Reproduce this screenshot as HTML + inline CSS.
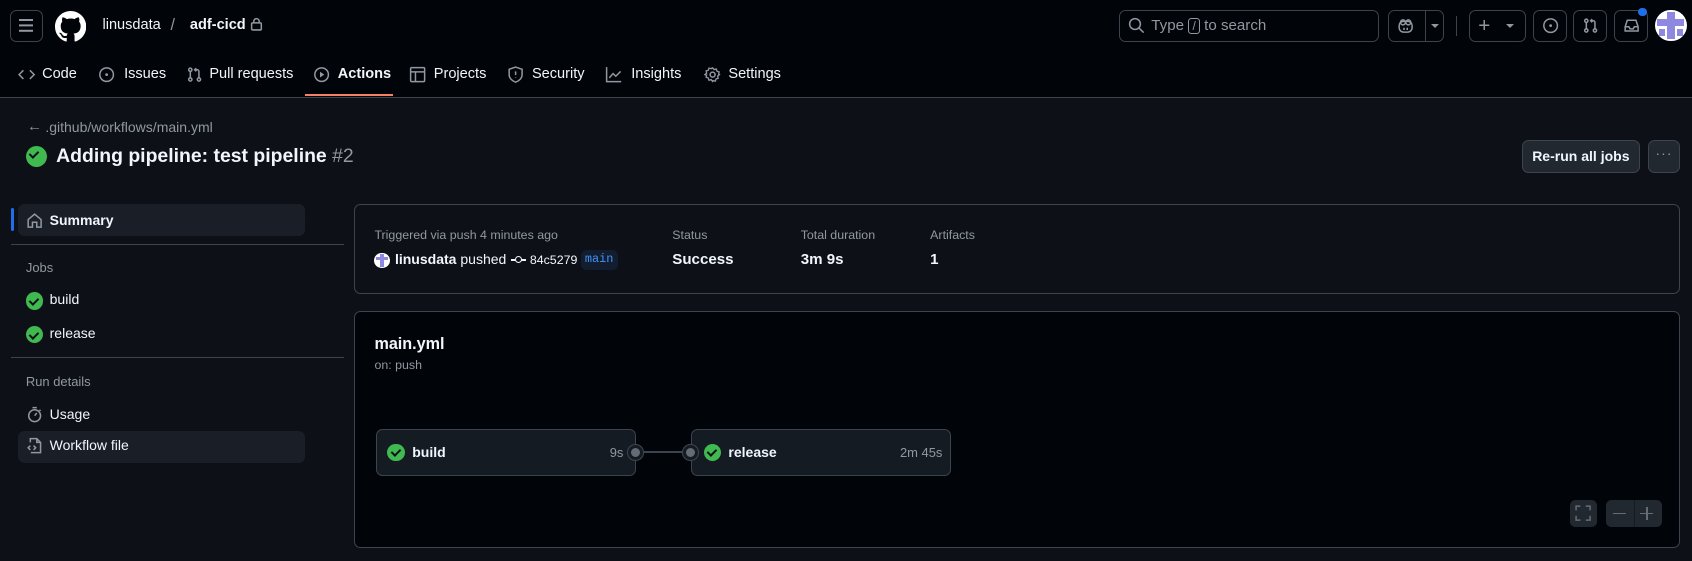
<!DOCTYPE html>
<html><head><meta charset="utf-8"><style>
html{zoom:1.0791}
*{box-sizing:border-box;margin:0;padding:0}
body{width:1568px;height:520px;overflow:hidden;background:#0d1117;font-family:"Liberation Sans",sans-serif;color:#f0f6fc;font-size:14px;position:relative}
.a{position:absolute}
.hdr{left:0;top:0;width:1568px;height:91px;background:#010409;border-bottom:1px solid #3d444d}
.btn{position:absolute;border:1px solid #3d444d;border-radius:6px;height:30px;top:9px}
.mut{color:#9198a1}
svg{display:block}
.ic{stroke:#9198a1;fill:none;stroke-width:1.4}
.nav{top:61px;font-size:13.5px;color:#f0f6fc}
.card{border:1px solid #3d444d;border-radius:6px}
.chk{position:absolute;width:16px;height:16px;border-radius:50%;background:#3fb950}
.chk:after{content:"";position:absolute;left:5px;top:3.5px;width:3.5px;height:6.5px;border:solid #0d1117;border-width:0 2px 2px 0;transform:rotate(45deg)}
</style></head><body>
<div class="a hdr"></div>
<div class="btn" style="left:9px;width:31px"><div class="a" style="left:8px;top:8px;width:13px;height:2px;background:#9198a1;box-shadow:0 5px 0 #9198a1,0 10px 0 #9198a1"></div></div>
<svg class="a" style="left:51px;top:10px" width="29" height="29" viewBox="0 0 16 16"><path fill="#fff" d="M8 0C3.58 0 0 3.58 0 8c0 3.540 2.29 6.53 5.47 7.59.4.07.55-.17.55-.38 0-.19-.01-.82-.01-1.49-2.01.37-2.530-.49-2.69-.94-.09-.23-.48-.94-.82-1.13-.28-.15-.68-.52-.01-.53.63-.01 1.08.58 1.23.82.72 1.21 1.87.87 2.33.66.07-.52.28-.87.51-1.07-1.78-.2-3.64-.89-3.64-3.95 0-.87.31-1.59.82-2.15-.08-.2-.36-1.02.08-2.12 0 0 .67-.21 2.2.82.64-.18 1.32-.27 2-.27.68 0 1.36.09 2 .27 1.53-1.04 2.2-.82 2.2-.82.44 1.1.16 1.92.08 2.12.51.56.82 1.27.82 2.15 0 3.07-1.87 3.75-3.65 3.95.29.25.54.73.54 1.48 0 1.07-.01 1.93-.01 2.2 0 .21.15.46.55.38A8.013 8.013 0 0016 8c0-4.42-3.58-8-8-8z"/></svg>
<div class="a" style="left:95px;top:16px;font-size:13.5px">linusdata</div>
<div class="a mut" style="left:158px;top:15px;font-size:15px">/</div>
<div class="a" style="left:176px;top:16px;font-weight:bold;font-size:13.5px">adf-cicd</div>
<svg class="a" style="left:232px;top:16px" width="12" height="13" viewBox="0 0 12 13"><rect x="1.5" y="5.5" width="9" height="6.5" rx="1" class="ic"/><path d="M3.5 5.5V4a2.5 2.5 0 015 0v1.5" class="ic"/></svg>
<div class="btn" style="left:1037px;width:241px"><svg class="a" style="left:7px;top:6px" width="16" height="16" viewBox="0 0 16 16"><circle cx="6.5" cy="6.5" r="5" class="ic"/><path d="M10 10l4.5 4.5" class="ic"/></svg><div class="a mut" style="left:29px;top:6px">Type <span style="border:1px solid #9198a1;border-radius:3px;padding:0 3px;font-size:11px">/</span> to search</div></div>
<div class="btn" style="left:1286px;width:52px"><div class="a" style="left:34px;top:0;width:1px;height:28px;background:#3d444d"></div><svg class="a" style="left:8px;top:6px" width="16" height="16" viewBox="0 0 16 16"><rect x="2" y="4" width="12" height="10" rx="4" class="ic"/><circle cx="5.5" cy="5" r="2.3" class="ic"/><circle cx="10.5" cy="5" r="2.3" class="ic"/><path d="M6.5 10v2M9.5 10v2" class="ic"/></svg><div class="a" style="left:39px;top:12px;border:4px solid transparent;border-top-color:#9198a1"></div></div>
<div class="a" style="left:1349px;top:15px;width:1px;height:18px;background:#3d444d"></div>
<div class="btn" style="left:1361px;width:53px"><div class="a" style="left:8px;top:3px;font-size:19px;color:#9198a1">+</div><div class="a" style="left:34px;top:12px;border:4px solid transparent;border-top-color:#9198a1"></div></div>
<div class="btn" style="left:1421px;width:31px"><svg class="a" style="left:7px;top:6px" width="16" height="16" viewBox="0 0 16 16"><circle cx="8" cy="8" r="6.3" class="ic"/><circle cx="8" cy="8" r="1.3" fill="#9198a1"/></svg></div>
<div class="btn" style="left:1458px;width:31px"><svg class="a" style="left:7px;top:6px" width="16" height="16" viewBox="0 0 16 16"><circle cx="4" cy="3.5" r="1.5" class="ic"/><circle cx="4" cy="12.5" r="1.5" class="ic"/><circle cx="12" cy="12.5" r="1.5" class="ic"/><path d="M4 5v6M12 11V5a1.5 1.5 0 00-1.5-1.5H8M9.5 2L8 3.5 9.5 5" class="ic"/></svg></div>
<div class="btn" style="left:1496px;width:31px"><svg class="a" style="left:7px;top:6px" width="16" height="16" viewBox="0 0 16 16"><path d="M2 9l2-6h8l2 6v4H2zM2 9h3.5l1 2h3l1-2H14" class="ic"/></svg></div>
<div class="a" style="left:1518px;top:7px;width:8px;height:8px;border-radius:50%;background:#1f6feb"></div>
<div class="a" style="left:1534px;top:9px;width:29px;height:29px;border-radius:50%;background:#fff;overflow:hidden"><div class="a" style="left:11px;top:2px;width:7px;height:25px;background:#8e88e0"></div><div class="a" style="left:2px;top:9px;width:25px;height:6px;background:#8e88e0"></div><div class="a" style="left:3px;top:18px;width:6px;height:6px;background:#8e88e0"></div><div class="a" style="left:20px;top:18px;width:6px;height:6px;background:#8e88e0"></div></div>

<svg class="a" style="left:17px;top:61px" width="16" height="16" viewBox="0 0 16 16"><path d="M5 4L1 8l4 4M11 4l4 4-4 4" class="ic"/></svg><div class="a nav" style="left:39px">Code</div>
<svg class="a" style="left:91px;top:61px" width="16" height="16" viewBox="0 0 16 16"><circle cx="8" cy="8" r="6.3" class="ic"/><circle cx="8" cy="8" r="1.3" fill="#9198a1"/></svg><div class="a nav" style="left:115px">Issues</div>
<svg class="a" style="left:172px;top:61px" width="16" height="16" viewBox="0 0 16 16"><circle cx="4" cy="3.5" r="1.5" class="ic"/><circle cx="4" cy="12.5" r="1.5" class="ic"/><circle cx="12" cy="12.5" r="1.5" class="ic"/><path d="M4 5v6M12 11V5a1.5 1.5 0 00-1.5-1.5H8M9.5 2L8 3.5 9.5 5" class="ic"/></svg><div class="a nav" style="left:194px">Pull requests</div>
<svg class="a" style="left:290px;top:61px" width="16" height="16" viewBox="0 0 16 16"><circle cx="8" cy="8" r="6.3" class="ic"/><path d="M6.5 5.3v5.4L10.5 8z" fill="#9198a1"/></svg><div class="a nav" style="left:313px;font-weight:bold">Actions</div>
<div class="a" style="left:283px;top:87px;width:81px;height:2px;background:#f78166"></div>
<svg class="a" style="left:379px;top:61px" width="16" height="16" viewBox="0 0 16 16"><rect x="1.5" y="1.5" width="13" height="13" rx="1" class="ic"/><path d="M1.5 5.5h13M6 5.5v9" class="ic"/></svg><div class="a nav" style="left:402px">Projects</div>
<svg class="a" style="left:470px;top:61px" width="16" height="16" viewBox="0 0 16 16"><path d="M8 1l6 2v5c0 3.5-3 6-6 7-3-1-6-3.5-6-7V3z" class="ic"/><path d="M8 5v3.5M8 10.5v.5" class="ic"/></svg><div class="a nav" style="left:493px">Security</div>
<svg class="a" style="left:561px;top:61px" width="16" height="16" viewBox="0 0 16 16"><path d="M1.5 1v13.5H15M4 11l3.5-4 2.5 2.5L14.5 5" class="ic"/></svg><div class="a nav" style="left:585px">Insights</div>
<svg class="a" style="left:652px;top:61px" width="16" height="16" viewBox="0 0 16 16"><circle cx="8" cy="8" r="2.3" class="ic"/><path d="M8 1l1.5 1.8 2.3-.5.7 2.2 2.2.7-.5 2.3L15 8l-1.8 1.5.5 2.3-2.2.7-.7 2.2-2.3-.5L8 15l-1.5-1.8-2.3.5-.7-2.2-2.2-.7.5-2.3L0 8l1.8-1.5-.5-2.3 2.2-.7.7-2.2 2.3.5z" class="ic" transform="scale(.9) translate(.9 .9)"/></svg><div class="a nav" style="left:675px">Settings</div>

<div class="a mut" style="left:25px;top:109px;font-size:14px">←</div>
<div class="a mut" style="left:42px;top:110px;font-size:13px">.github/workflows/main.yml</div>
<div class="chk" style="left:24px;top:135px;width:20px;height:20px"></div>
<div class="a" style="left:52px;top:134px;font-size:18px;font-weight:bold">Adding pipeline: test pipeline <span class="mut" style="font-weight:normal">#2</span></div>
<div class="a" style="left:1410px;top:130px;width:110px;height:30px;border:1px solid #3d444d;border-radius:6px;background:#212830;font-weight:bold;font-size:13px;text-align:center;line-height:28px">Re-run all jobs</div>
<div class="a mut" style="left:1527px;top:130px;width:30px;height:30px;border:1px solid #3d444d;border-radius:6px;background:#212830;text-align:center;line-height:24px;font-size:13px;letter-spacing:1px">···</div>

<div class="a" style="left:17px;top:189px;width:266px;height:30px;background:#1a1f27;border-radius:6px"></div>
<div class="a" style="left:10px;top:193px;width:3px;height:21px;background:#1f6feb;border-radius:2px"></div>
<svg class="a" style="left:24px;top:196px" width="16" height="16" viewBox="0 0 16 16"><path d="M2 7l6-5 6 5v7h-4v-4.5H6V14H2z" class="ic"/></svg>
<div class="a" style="left:46px;top:196px;font-weight:bold;font-size:13px">Summary</div>
<div class="a" style="left:10px;top:226px;width:309px;height:1px;background:#3d444d"></div>
<div class="a mut" style="left:24px;top:241px;font-size:12px">Jobs</div>
<div class="chk" style="left:24px;top:271px"></div><div class="a" style="left:46px;top:270px;font-size:13px">build</div>
<div class="chk" style="left:24px;top:302px"></div><div class="a" style="left:46px;top:301px;font-size:13px">release</div>
<div class="a" style="left:10px;top:331px;width:309px;height:1px;background:#3d444d"></div>
<div class="a mut" style="left:24px;top:347px;font-size:12px">Run details</div>
<svg class="a" style="left:24px;top:376px" width="16" height="16" viewBox="0 0 16 16"><circle cx="8" cy="9" r="5.5" class="ic"/><path d="M6 1.5h4M8 9l2-2.5M12.5 3.5l1 1" class="ic"/></svg>
<div class="a" style="left:46px;top:376px;font-size:13px">Usage</div>
<div class="a" style="left:17px;top:399px;width:266px;height:30px;background:#1a1f27;border-radius:6px"></div>
<svg class="a" style="left:24px;top:405px" width="16" height="16" viewBox="0 0 16 16"><path d="M4 5V1.5h6l3.5 3.5v9.5h-9M10 1.5V5h3.5M4 8l-2 2 2 2M7 8l2 2-2 2" class="ic"/></svg>
<div class="a" style="left:46px;top:405px;font-size:13px">Workflow file</div>

<div class="a card" style="left:328px;top:189px;width:1229px;height:83px"></div>
<div class="a mut" style="left:347px;top:211px;font-size:11.5px">Triggered via push 4 minutes ago</div>
<div class="a" style="left:347px;top:234px;width:14px;height:14px;border-radius:50%;background:#fff;overflow:hidden"><div class="a" style="left:5px;top:1px;width:4px;height:12px;background:#8e88e0"></div><div class="a" style="left:1px;top:4px;width:12px;height:3px;background:#8e88e0"></div></div>
<div class="a" style="left:366px;top:233px;font-size:13px"><b>linusdata</b> pushed</div>
<div class="a" style="left:474px;top:240px;width:13px;height:1.5px;background:#f0f6fc"></div><div class="a" style="left:477px;top:237px;width:7px;height:7px;border:1.5px solid #f0f6fc;border-radius:50%;background:#0d1117"></div>
<div class="a" style="left:491px;top:234px;font-size:11.5px">84c5279</div>
<div class="a" style="left:538px;top:232px;height:18px;padding:0 4px;background:#121d2f;border-radius:5px;color:#4493f8;font-family:'Liberation Mono',monospace;font-size:11px;line-height:18px">main</div>
<div class="a mut" style="left:623px;top:211px;font-size:11.5px">Status</div><div class="a" style="left:623px;top:233px;font-size:14px;font-weight:bold">Success</div>
<div class="a mut" style="left:742px;top:211px;font-size:11.5px">Total duration</div><div class="a" style="left:742px;top:233px;font-size:14px;font-weight:bold">3m 9s</div>
<div class="a mut" style="left:862px;top:211px;font-size:11.5px">Artifacts</div><div class="a" style="left:862px;top:233px;font-size:14px;font-weight:bold">1</div>

<div class="a card" style="left:328px;top:288px;width:1229px;height:220px;background:#010409"></div>
<div class="a" style="left:347px;top:310px;font-size:15px;font-weight:bold">main.yml</div>
<div class="a mut" style="left:347px;top:332px;font-size:11.5px">on: push</div>
<div class="a card" style="left:348px;top:398px;width:241px;height:43px;background:#151b23"></div>
<div class="chk" style="left:359px;top:411px"></div><div class="a" style="left:382px;top:411px;font-weight:bold;font-size:13px">build</div><div class="a mut" style="left:565px;top:412px;font-size:12px">9s</div>
<div class="a card" style="left:640px;top:398px;width:241px;height:43px;background:#151b23"></div>
<div class="chk" style="left:652px;top:411px"></div><div class="a" style="left:675px;top:411px;font-weight:bold;font-size:13px">release</div><div class="a mut" style="left:834px;top:412px;font-size:12px">2m 45s</div>
<div class="a" style="left:589px;top:418px;width:51px;height:2px;background:#3d444d"></div>
<div class="a" style="left:582px;top:412px;width:14px;height:14px;border-radius:50%;background:#656c76;border:3px solid #151b23;box-shadow:0 0 0 1px #3d444d"></div>
<div class="a" style="left:633px;top:412px;width:14px;height:14px;border-radius:50%;background:#656c76;border:3px solid #151b23;box-shadow:0 0 0 1px #3d444d"></div>
<div class="a" style="left:1455px;top:463px;width:25px;height:25px;border-radius:5px;background:#212830"><svg class="a" style="left:5px;top:5px" width="15" height="15" viewBox="0 0 15 15"><path d="M1 5V1h4M10 1h4v4M14 10v4h-4M5 14H1v-4" stroke="#656c76" fill="none" stroke-width="1.4"/></svg></div>
<div class="a" style="left:1488px;top:463px;width:52px;height:25px;border-radius:5px;background:#212830"><div class="a" style="left:26px;top:0;width:1px;height:25px;background:#151b23"></div><div class="a" style="left:7px;top:12px;width:12px;height:1.3px;background:#656c76"></div><div class="a" style="left:32px;top:12px;width:12px;height:1.3px;background:#656c76"></div><div class="a" style="left:37.5px;top:6.5px;width:1.3px;height:12px;background:#656c76"></div></div>
</body></html>
